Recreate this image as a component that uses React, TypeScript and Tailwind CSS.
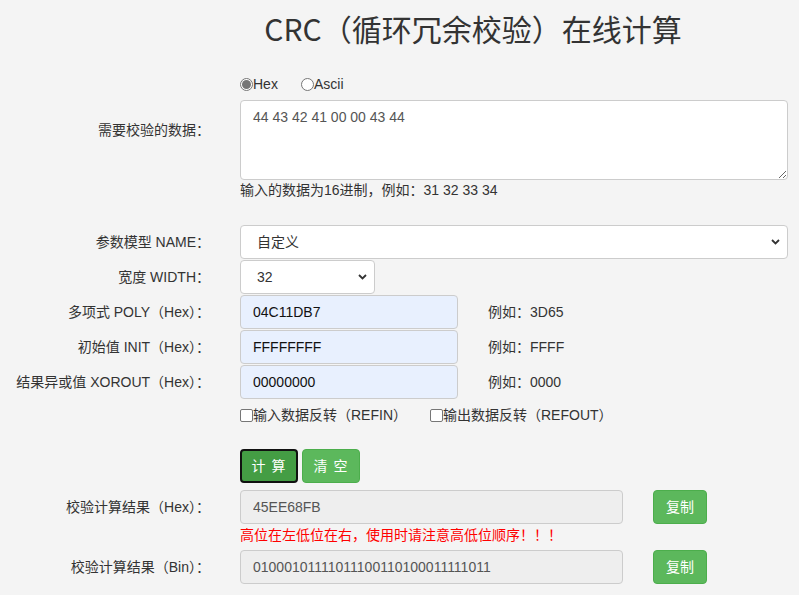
import React from "react";

const font = "font-['Liberation_Sans','Noto_Sans_CJK_SC',sans-serif]";

function Label({ children, className = "" }: { children: React.ReactNode; className?: string }) {
  return (
    <div className={`w-[225px] shrink-0 pr-[15px] text-right text-[14px] leading-[20px] text-[#333] whitespace-nowrap ${className}`}>
      {children}
    </div>
  );
}

function Chevron() {
  return (
    <svg width="11" height="8" viewBox="0 0 11 8" className="shrink-0">
      <path d="M2 2 L5.5 5.5 L9 2" fill="none" stroke="#333" strokeWidth="1.8" />
    </svg>
  );
}

function Select({ value, w }: { value: string; w: string }) {
  return (
    <div className={`${w} h-[34px] bg-white border border-[#ccc] rounded-[4px] flex items-center justify-between pl-[16px] pr-[6px] text-[14px] text-[#333]`}>
      <span>{value}</span>
      <Chevron />
    </div>
  );
}

function ParamRow({ label, value, example }: { label: string; value: string; example: string }) {
  return (
    <div className="flex items-center h-[34px]">
      <Label>{label}</Label>
      <div className="pl-[15px] flex items-center">
        <input
          defaultValue={value}
          className="w-[218px] h-[34px] bg-[#e8f0fe] border border-[#ccc] rounded-[4px] px-[12px] text-[14px] text-[#111] outline-none"
        />
        <span className="ml-[30px] text-[14px] text-[#333]">{example}</span>
      </div>
    </div>
  );
}

function Radio({ checked }: { checked?: boolean }) {
  return (
    <span className="w-[13px] h-[13px] rounded-full border border-[#767676] bg-white flex items-center justify-center shrink-0">
      {checked && <span className="w-[9px] h-[9px] rounded-full bg-[#767676]" />}
    </span>
  );
}

function Checkbox() {
  return <span className="w-[13px] h-[13px] rounded-[2px] border border-[#767676] bg-white shrink-0" />;
}

function ResultRow({ label, value }: { label: string; value: string }) {
  return (
    <div className="flex items-center h-[34px]">
      <Label>{label}</Label>
      <div className="pl-[15px] flex items-center">
        <input
          readOnly
          defaultValue={value}
          className="w-[383px] h-[34px] bg-[#eee] border border-[#ccc] rounded-[4px] px-[12px] text-[14px] text-[#555] outline-none"
        />
        <button className="ml-[30px] w-[54px] h-[34px] bg-[#5cb85c] border border-[#4cae4c] rounded-[4px] text-white text-[14px]">
          复制
        </button>
      </div>
    </div>
  );
}

export default function App() {
  return (
    <div className={`w-[799px] h-[595px] bg-[#f4f4f4] overflow-hidden ${font}`}>
      <div className="h-[56px] pl-[147px] flex items-center justify-center">
        <h1 className="text-[30px] font-normal text-[#333] font-['Noto_Sans_CJK_SC',sans-serif] leading-none">
          CRC（循环冗余校验）在线计算
        </h1>
      </div>

      <div className="flex mt-[19px]">
        <Label className="pt-[45px]">需要校验的数据：</Label>
        <div className="pl-[15px] flex flex-col">
          <div className="flex items-center h-[18px] text-[14px] text-[#333]">
            <div className="flex items-center w-[61px]">
              <Radio checked />
              <span>Hex</span>
            </div>
            <div className="flex items-center">
              <Radio />
              <span>Ascii</span>
            </div>
          </div>
          <textarea
            defaultValue="44 43 42 41 00 00 43 44"
            className="mt-[7px] w-[548px] h-[80px] bg-white border border-[#ccc] rounded-[4px] px-[12px] py-[6px] text-[14px] leading-[20px] text-[#555] outline-none block"
          />
          <div className="h-[18px] leading-[18px] mt-[1px] text-[14px] text-[#333]">输入的数据为16进制，例如：31 32 33 34</div>
        </div>
      </div>

      <div className="mt-[26px] flex flex-col gap-[1px]">
        <div className="flex items-center h-[34px]">
          <Label>参数模型 NAME：</Label>
          <div className="pl-[15px]">
            <Select value="自定义" w="w-[548px]" />
          </div>
        </div>
        <div className="flex items-center h-[34px]">
          <Label>宽度 WIDTH：</Label>
          <div className="pl-[15px]">
            <Select value="32" w="w-[135px]" />
          </div>
        </div>
        <ParamRow label="多项式 POLY（Hex）：" value="04C11DB7" example="例如：3D65" />
        <ParamRow label="初始值 INIT（Hex）：" value="FFFFFFFF" example="例如：FFFF" />
        <ParamRow label="结果异或值 XOROUT（Hex）：" value="00000000" example="例如：0000" />
      </div>

      <div className="flex mt-[7px] h-[18px] items-center">
        <div className="w-[225px] shrink-0" />
        <div className="pl-[15px] flex items-center text-[14px] text-[#333]">
          <div className="flex items-center w-[190px]">
            <Checkbox />
            <span>输入数据反转（REFIN）</span>
          </div>
          <div className="flex items-center">
            <Checkbox />
            <span>输出数据反转（REFOUT）</span>
          </div>
        </div>
      </div>

      <div className="flex mt-[25px]">
        <div className="w-[225px] shrink-0" />
        <div className="pl-[15px] flex gap-[4px]">
          <button className="w-[58px] h-[34px] bg-[#449d44] border-2 border-[#111] rounded-[4px] text-white text-[14px] tracking-[1px]">
            计 算
          </button>
          <button className="w-[58px] h-[34px] bg-[#5cb85c] border border-[#4cae4c] rounded-[4px] text-white text-[14px] tracking-[1px]">
            清 空
          </button>
        </div>
      </div>

      <div className="mt-[7px]">
        <ResultRow label="校验计算结果（Hex）：" value="45EE68FB" />
      </div>
      <div className="flex mt-[1px] h-[20px] items-center">
        <div className="w-[225px] shrink-0" />
        <div className="pl-[15px] text-[14px] text-[#f00]">高位在左低位在右，使用时请注意高低位顺序！！！</div>
      </div>
      <div className="mt-[5px]">
        <ResultRow label="校验计算结果（Bin）：" value="01000101111011100110100011111011" />
      </div>
    </div>
  );
}
